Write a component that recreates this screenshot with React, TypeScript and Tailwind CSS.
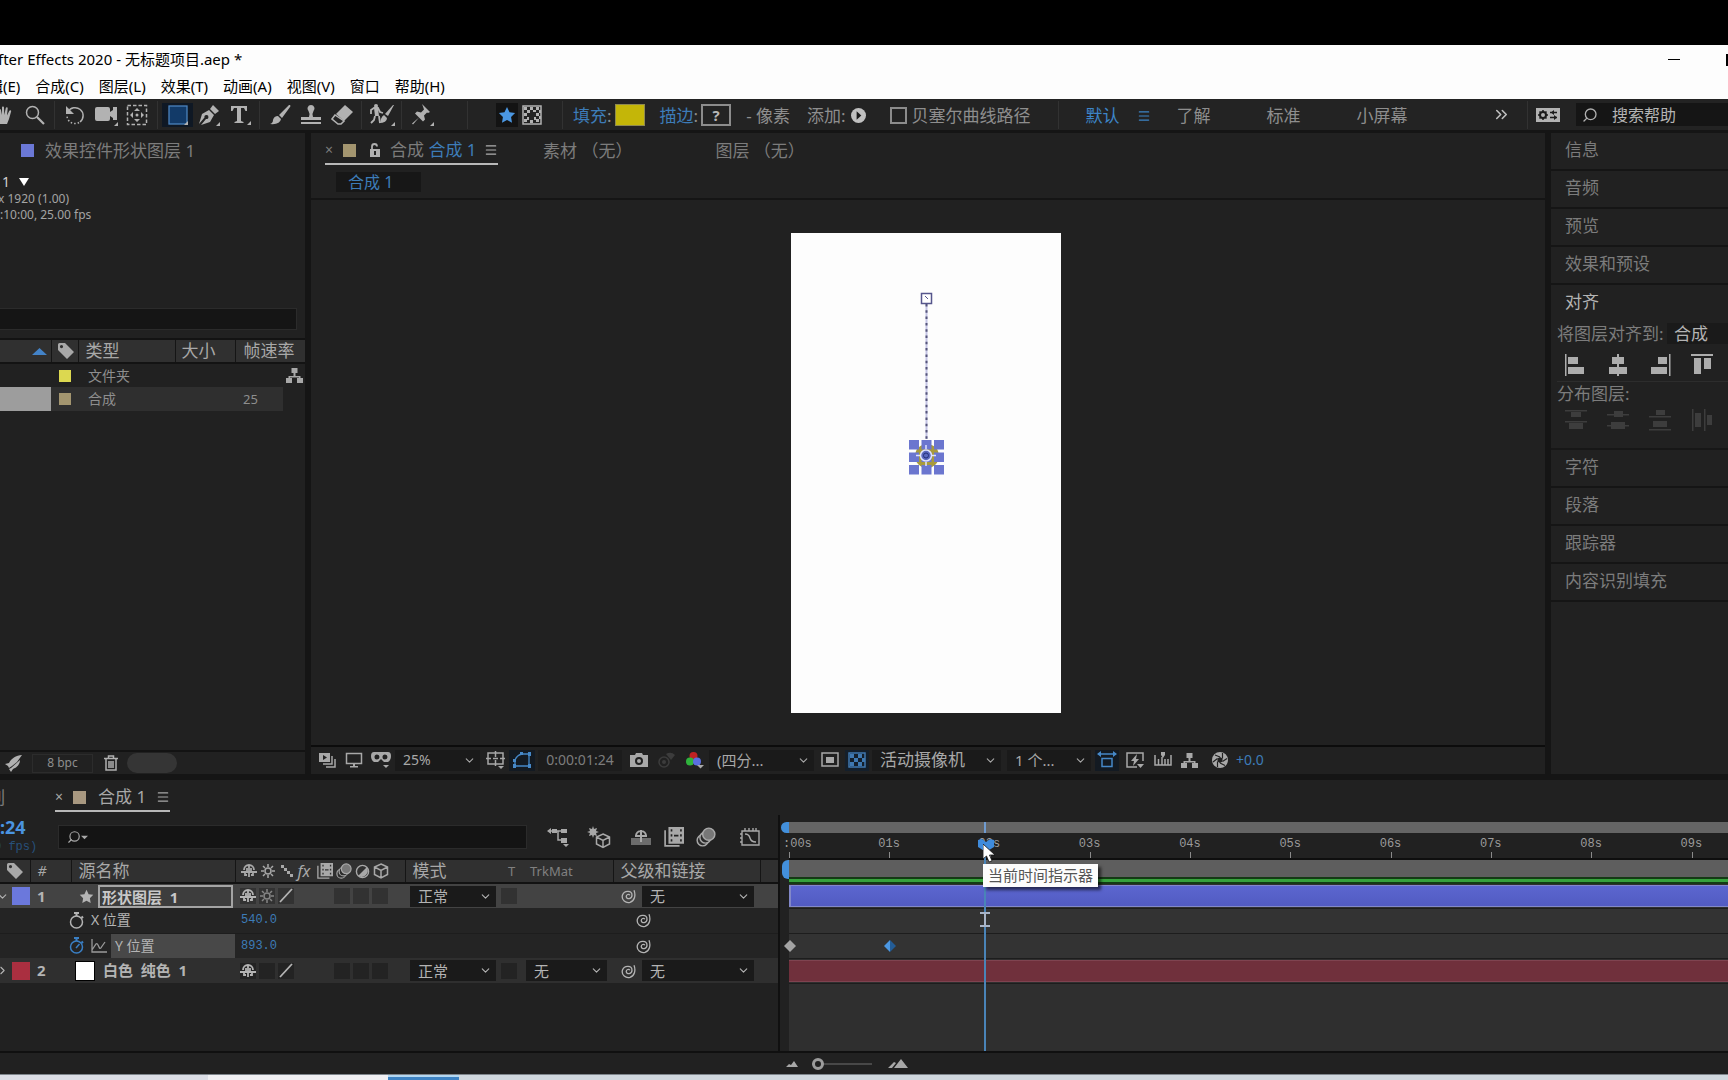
import type { ReactNode } from "react";
import { ChevronDown, ChevronRight, ChevronsRight, Menu, Search } from "lucide-react";

type IconProps = { size?: number; box?: number; className?: string; children: ReactNode };

function Icon({ size = 20, box = 20, className = "", children }: IconProps) {
  return (
    <svg width={size} height={size} viewBox={`0 0 ${box} ${box}`} fill="currentColor" className={`shrink-0 ${className}`} aria-hidden="true">
      {children}
    </svg>
  );
}

const line = { fill: "none", stroke: "currentColor", strokeWidth: 1.5 };
const corner = <path d="M20 16v4h-4z" />;

const HandIcon = () => (
  <Icon>
    <path d="M6 19 2 11.5c-.6-1.4 1-2 1.8-1L6 13 5 5c-.1-1.300 1.600-1.500 1.900-.2L8 10V2.500c0-1.400 1.900-1.400 2 0l.3 7.500L11.800 3c.3-1.300 2-1 1.900.3L13 10.500l2.300-4.700c.6-1.200 2.200-.5 1.800.8L15 14l-2 5z" />
  </Icon>
);
const LensIcon = () => (
  <Icon>
    <circle cx="7.500" cy="7.500" r="6" {...line} />
    <path d="m12 12 7 7" {...line} strokeWidth={2.200} />
  </Icon>
);
const RotateIcon = () => (
  <Icon>
    <path d="M3 7a8 8 0 1 1 12 10" {...line} />
    <path d="M1 1v8h8z" />
    <path d="M14 17.500A8 8 0 0 1 2 10" {...line} strokeDasharray="1.500 2" />
  </Icon>
);
const CameraIcon = () => (
  <Icon size={24} box={24}>
    <path d="M1 6q0-2 2-2h11q2 0 2 2v3l3-2V4h4v13h-4v-2l-3-2v3q0 2-2 2H3q-2 0-2-2z" />
    <path d="M24 19v4h-4z" />
  </Icon>
);
const PanBehindIcon = () => (
  <Icon size={22} box={22}>
    <rect x="1.500" y="1.500" width="19" height="19" {...line} strokeDasharray="3.500 2" />
    <path d="m11 4 3 3H8zM11 18l3-3H8zM4 11l3-3v6zM18 11l-3-3v6z" />
    <circle cx="11" cy="11" r="1.500" />
  </Icon>
);
const PenIcon = () => (
  <Icon size={22} box={22}>
    <path d="M1 20 4 10l7-4 5 5-4 7-9 3 5-6a2 2 0 1 0-1.500-1.500z" />
    <path d="m12 5 3-4 6 6-4 3z" />
    <path d="M22 18v4h-4z" />
  </Icon>
);
const TypeIcon = () => (
  <Icon size={22} box={22}>
    <path d="M2 2h16v5h-1.500L15 4h-3v13l2.500 1v1h-9v-1L8 17V4H5L3.500 7H2z" />
    <path d="M22 17v4h-4z" />
  </Icon>
);
const BrushIcon = () => (
  <Icon size={22} box={22}>
    <path d="M21 1q1 1 0 2l-8 11-3-3L20 1zM9 12l3 3q-1 6-11 5 3-1 3-4 1-4 5-4z" />
  </Icon>
);
const StampIcon = () => (
  <Icon size={22} box={22}>
    <path d="M11 1a3.500 3.500 0 0 1 2.500 6Q12 9 13 13h8v3H1v-3h8q1-4-.5-6A3.500 3.500 0 0 1 11 1zM1 18h20v2H1z" />
  </Icon>
);
const EraserIcon = () => (
  <Icon size={22} box={22}>
    <path d="M14 1 22 8 13 17 5 10z" />
    <path d="m4 11-3 4 6 5h3l3-3z" {...line} />
  </Icon>
);
const RotoIcon = () => (
  <Icon size={26} box={26}>
    <circle cx="7" cy="4" r="2" />
    <path d="M2 12V8l3-2h4l2 4 3 1M10 14l1 7M6 14l-1 4-3 3" {...line} strokeWidth={1.800} />
    <path d="M5 6h4l1 8H6z" />
    <path d="m25 3-6 11-3-2 8-9zM15 13l3 3q0 5-8 5 2-1 2-4 1-3 3-4z" />
    <path d="M26 20v4h-4z" />
  </Icon>
);
const PinIcon = () => (
  <Icon size={24} box={24}>
    <path d="m12 1 8 8-2 1-1-.5-3 3 1 4-2 2-4-4-6 7-1-1 7-6-4-4 2-2 4 1 3-3-1-3z" />
    <path d="M24 19v4h-4z" />
  </Icon>
);
const StarIcon = ({ size = 18 }: { size?: number }) => (
  <Icon size={size} box={20}>
    <path d="m10 1 2.800 6 6.200.8-4.500 4.400 1.100 6.300L10 15.500l-5.600 3 1.100-6.300L1 7.800 7.200 7z" />
  </Icon>
);
const MaskPatternIcon = () => (
  <Icon>
    <rect x="1" y="1" width="18" height="18" {...line} />
    <path d="M2 2h3v3H2zM8 2h3v3H8zM14 2h3v3h-3zM5 5h3v3H5zM11 5h3v2h-3zM2 8h3v3H2zM14 8h3v3h-3zM2 14h3v3H2zM8 15h3v3H8zM14 14h3v3h-3zM5 12h2v3H5zM12 12h2v3h-2zM17 5h2v3h-2zM17 11h2v3h-2z" />
  </Icon>
);
const TagIcon = () => (
  <Icon size={16} box={16}>
    <path fillRule="evenodd" d="M0 1.500Q0 0 1.500 0H7l9 9-7 7-9-9zM3.500 2a1.600 1.600 0 1 0 0 3.200 1.600 1.600 0 0 0 0-3.200z" />
  </Icon>
);
const FlowchartIcon = () => (
  <Icon size={17} box={17}>
    <path d="M5.500 1h6v5h-2v3h5v2H17v5h-6v-5h2v-.5H4v.5h2v5H0v-5h2.500V9h5V6h-2z" />
  </Icon>
);
const SpiralIcon = () => (
  <Icon size={16} box={16}>
    <path d="M9.800 7.200C9 5.500 6 6.500 6.300 8.800c.5 3 5.700 2.200 5.700-1.500C12 2.500 4.500 2 2.500 7c-1.500 5 3.500 8.500 7.500 7.300 4.500-1.500 6-6.800 4-12" {...line} strokeWidth={1.300} />
  </Icon>
);
const ShyIcon = ({ size = 16 }: { size?: number }) => (
  <Icon size={size} box={16}>
    <path d="M3 7a5 5 0 0 1 10 0M8 2v12M0 9h16M4 9v3h2M12 9v3h-2M6 5v4M10 5v4" {...line} strokeWidth={1.800} />
  </Icon>
);
const SunIcon = () => (
  <Icon size={16} box={16}>
    <circle cx="8" cy="8" r="3" {...line} />
    <path d="M8 1v3M8 12v3M1 8h3M12 8h3M3 3l2 2M11 11l2 2M3 13l2-2M11 5l2-2" {...line} />
  </Icon>
);
const SlashIcon = () => (
  <Icon size={16} box={16}>
    <path d="M2 14 14 1" {...line} strokeWidth={1.800} />
  </Icon>
);
const DashIcon = () => (
  <Icon size={16} box={16}>
    <path d="M2 2h3v3H2zM5 5h3v3H5zM8 8h3v3H8zM11 11h3v3h-3z" />
  </Icon>
);
const FilmIcon = ({ size = 16 }: { size?: number }) => (
  <Icon size={size} box={18}>
    <path fillRule="evenodd" d="M4 0h14v15H4zM6 2v2h1.500V2zM6 6.500v2h1.500v-2zM6 11v2h1.500v-2zM14.500 2v2H16V2zM14.500 6.500v2H16v-2zM14.500 11v2H16v-2zM9 7v1.500h4V7z" />
    <path d="M1 3v14h13" {...line} />
  </Icon>
);
const BlurIcon = ({ size = 16 }: { size?: number }) => (
  <Icon size={size} box={18}>
    <circle cx="6" cy="12" r="5" fill="#2b2b2b" stroke="currentColor" strokeWidth="1.300" />
    <circle cx="8.500" cy="9.500" r="5" fill="#2b2b2b" stroke="currentColor" strokeWidth="1.300" />
    <circle cx="11.500" cy="6.500" r="5.500" fill="#777" stroke="currentColor" strokeWidth="1.300" />
  </Icon>
);
const AdjustIcon = () => (
  <Icon size={15} box={16}>
    <circle cx="8" cy="8" r="6.500" {...line} />
    <path d="M12.500 3.500a6.500 6.500 0 0 1-9 9z" />
  </Icon>
);
const CubeIcon = () => (
  <Icon size={16} box={16}>
    <path d="m8 1 6.500 3v7.500L8 15l-6.500-3.500V4zM1.500 4 8 7.500 14.500 4M8 7.500V15" {...line} />
  </Icon>
);
const StopwatchIcon = ({ active = false }: { active?: boolean }) => (
  <Icon size={17} box={17} className={active ? "text-[#3a7fc4]" : ""}>
    <circle cx="8.500" cy="10" r="6" {...line} />
    <path d="M6 1h5M8.500 1v3M13.500 4.500 15 6" {...line} strokeWidth={2} />
    {active && <path d="m8 11 3.500-4" {...line} />}
  </Icon>
);
const GraphIcon = () => (
  <Icon size={16} box={16}>
    <path d="M1 1v13h15M1 12l4-6q1-1 2 1l1.500 3q1 1 2-1L14 4" {...line} strokeWidth={1.300} />
  </Icon>
);

/* ---------- shared bits ---------- */

function ToolButton({ label, active, children }: { label: string; active?: boolean; children: ReactNode }) {
  return (
    <button
      aria-label={label}
      className={`flex h-6 w-[31px] shrink-0 items-center justify-center ${active ? "bg-[#0f1824]" : ""}`}
    >
      {children}
    </button>
  );
}

function Divider({ className = "w-[9px]" }: { className?: string }) {
  return (
    <div className={`flex shrink-0 justify-center ${className}`}>
      <div className="h-7 w-px bg-[#323232]" />
    </div>
  );
}

type DropProps = { label: string; value: string; className?: string; size?: string };

function Drop({ label, value, className = "", size = "text-[15px]" }: DropProps) {
  return (
    <div className={`grid h-[21px] items-center bg-[#1a1a1a] ${className}`}>
      <select aria-label={label} className={`col-start-1 row-start-1 h-[21px] w-full appearance-none bg-transparent pl-2 leading-5 outline-none ${size}`}>
        <option>{value}</option>
      </select>
      <ChevronDown size={13} className="pointer-events-none col-start-1 row-start-1 mr-1 justify-self-end" />
    </div>
  );
}

/* ---------- window chrome ---------- */

const menus = ["合成(C)", "图层(L)", "效果(T)", "动画(A)", "视图(V)", "窗口", "帮助(H)"];

function TitleBar() {
  return (
    <header className="h-[54px] shrink-0 overflow-hidden bg-[#fdfdfd] text-[15px] text-black">
      <div className="flex h-[29px] items-center justify-between">
        <h1 className="-ml-0.5 whitespace-pre">fter Effects 2020 - 无标题项目.aep *</h1>
        <div className="flex items-center">
          <button aria-label="最小化" className="flex h-6 w-[46px] items-center justify-center">
            <span className="h-px w-3 bg-black" />
          </button>
          <button aria-label="最大化" className="ml-[29px] h-3 w-0.5 bg-black" />
        </div>
      </div>
      <nav className="-ml-3 flex h-6 items-center gap-[15px]">
        <button>辑(E)</button>
        {menus.map((m) => (
          <button key={m}>{m}</button>
        ))}
      </nav>
    </header>
  );
}

const workspaces = ["了解", "标准", "小屏幕"];

function Toolbar() {
  return (
    <div className="flex h-[31px] shrink-0 items-center overflow-hidden bg-[#232323] text-[17px] text-[#8e8e8e]">
      <div className="-ml-3 flex shrink-0 items-center text-[#b2b2b2]">
        <ToolButton label="手形工具"><HandIcon /></ToolButton>
        <ToolButton label="缩放工具"><LensIcon /></ToolButton>
        <Divider />
        <ToolButton label="旋转工具"><RotateIcon /></ToolButton>
        <ToolButton label="摄像机工具"><CameraIcon /></ToolButton>
        <ToolButton label="锚点工具"><PanBehindIcon /></ToolButton>
        <Divider className="w-2.5" />
        <ToolButton label="矩形工具" active>
          <Icon>
            <rect x="1" y="1" width="18" height="18" fill="#123a68" stroke="#4b83bd" strokeWidth="1.300" />
            {corner}
          </Icon>
        </ToolButton>
        <ToolButton label="钢笔工具"><PenIcon /></ToolButton>
        <ToolButton label="文字工具"><TypeIcon /></ToolButton>
        <Divider />
        <ToolButton label="画笔工具"><BrushIcon /></ToolButton>
        <ToolButton label="仿制图章工具"><StampIcon /></ToolButton>
        <ToolButton label="橡皮擦工具"><EraserIcon /></ToolButton>
        <Divider />
        <ToolButton label="Roto 笔刷工具"><RotoIcon /></ToolButton>
        <Divider />
        <ToolButton label="人偶位置控点工具"><PinIcon /></ToolButton>
      </div>
      <Divider className="ml-[26px] w-[9px]" />
      <button aria-label="工具创建形状" className="ml-6 flex h-6 w-[22px] shrink-0 items-center justify-center bg-[#131313] text-[#4b97e2]">
        <StarIcon />
      </button>
      <button aria-label="工具创建蒙版" className="ml-1 shrink-0 text-[#b2b2b2]"><MaskPatternIcon /></button>
      <Divider className="ml-4 w-[9px]" />
      <button className="ml-1.5 shrink-0 pt-0.5 text-[#3d7cb8]">填充<span className="text-[#8e8e8e]">:</span></button>
      <button aria-label="填充颜色" className="ml-[3px] h-[22px] w-[30px] shrink-0 border border-[#8f8a50] bg-[#c4b608]" />
      <button className="ml-[15px] shrink-0 pt-0.5 text-[#3d7cb8]">描边<span className="text-[#8e8e8e]">:</span></button>
      <button aria-label="描边颜色" className="ml-[3px] h-[22px] w-[30px] shrink-0 border-2 border-[#8c8c8c] text-[15px] leading-[18px] font-bold text-[#b8b8b8]">?</button>
      <span className="ml-[15px] shrink-0 pt-0.5">- 像素</span>
      <button className="ml-[17px] flex shrink-0 items-center gap-[5px] pt-0.5">
        添加:
        <Icon size={15} box={16} className="text-[#c0c0c0]">
          <circle cx="8" cy="8" r="8" />
          <path d="m6 3.500 5 4.500-5 4.500z" fill="#1b1b1b" />
        </Icon>
      </button>
      <label className="ml-6 flex shrink-0 items-center gap-[5px] pt-0.5">
        <input type="checkbox" className="size-[17px] appearance-none border-2 border-[#8c8c8c]" />
        贝塞尔曲线路径
      </label>
      <Divider className="ml-[23px] w-[9px]" />
      <div className="ml-[23px] flex flex-1 items-center pt-0.5">
        <button className="flex shrink-0 items-center gap-[17px] text-[#3d85c8]">
          默认 <Menu size={14} />
        </button>
        <div className="ml-[26px] flex gap-[56px]">
          {workspaces.map((w) => (
            <button key={w} className="shrink-0">{w}</button>
          ))}
        </div>
      </div>
      <button aria-label="更多工作区" className="mr-1 shrink-0 text-[#c0c0c0]"><ChevronsRight size={19} /></button>
      <Divider className="ml-1 w-[17px]" />
      <button aria-label="工作区设置" className="shrink-0 text-[#b2b2b2]">
        <svg width="24" height="14" viewBox="0 0 24 14" fill="currentColor" aria-hidden="true">
          <path d="M0 0h24v14H0z" />
          <circle cx="7" cy="7" r="3" fill="none" stroke="#1b1b1b" strokeWidth="2" />
          <path d="M7 2v2M7 10v2M2 7h2M10 7h2M3.500 3.500 5 5M9 9l1.500 1.500M3.500 10.500 5 9M9 5l1.500-1.500M14 4.500h7M14 9.500h7" stroke="#1b1b1b" strokeWidth="1.500" />
          <path d="m18 2-3 2.500L18 7zM18 7l3 2.500-3 2.500z" fill="#1b1b1b" />
        </svg>
      </button>
      <label className="ml-4 flex h-[23px] w-[152px] shrink-0 items-center gap-3.5 bg-[#151515] pl-1.5">
        <Search size={16} className="-scale-x-100 text-[#b0b0b0]" />
        <input aria-label="搜索帮助" placeholder="搜索帮助" className="min-w-0 flex-1 bg-transparent text-base outline-none placeholder:text-[#b4b4b4]" />
      </label>
    </div>
  );
}

/* ---------- project panel ---------- */

function ProjectPanel() {
  return (
    <section className="flex w-[305px] shrink-0 flex-col bg-[#212121]">
      <div className="flex h-[34px] shrink-0 items-center pl-[21px] text-[17px] text-[#7c7c7c]">
        <span className="mr-[11px] size-[13px] bg-[#6b78d6]" />
        <span className="pt-0.5">效果控件形状图层 1</span>
      </div>
      <div className="h-[141px] shrink-0 pt-1.5 text-xs leading-4 text-[#a4a4a4]">
        <button className="flex h-[18px] items-center gap-[9px] pl-0.5 text-sm text-[#d0d0d0]">
          1
          <Icon size={10} box={10} className="text-white"><path d="M0 1h10L5 9z" /></Icon>
        </button>
        <p className="-ml-0.5">x 1920 (1.00)</p>
        <p>:10:00, 25.00 fps</p>
      </div>
      <div className="mr-2 h-[22px] shrink-0 border border-l-0 border-[#2b2b2b] bg-[#151515]">
        <input aria-label="搜索项目" className="h-full w-full bg-transparent outline-none" />
      </div>
      <div className="mt-2 flex flex-1 items-start">
        <table className="w-full table-fixed border-collapse text-left text-sm text-[#8e8e8e]">
          <colgroup>
            <col className="w-[51px]" />
            <col className="w-[27px]" />
            <col className="w-[97px]" />
            <col className="w-[60px]" />
            <col className="w-[48px]" />
            <col />
          </colgroup>
          <thead>
            <tr className="h-6 border-y-2 border-[#131313] bg-[#303030] text-[17px] leading-[22px] text-[#a8a8a8]">
              <th className="border-r border-[#151515] p-0">
                <Icon size={15} box={15} className="ml-8 text-[#4383c8]"><path d="M0 11h15L7.500 4z" /></Icon>
              </th>
              <th className="border-r border-[#151515] p-0 pl-1.5"><TagIcon /></th>
              <th className="border-r border-[#151515] p-0 pl-[7px] font-normal">类型</th>
              <th className="border-r border-[#151515] p-0 pl-1.5 font-normal">大小</th>
              <th colSpan={2} className="p-0 pl-2 font-normal">帧速率</th>
            </tr>
          </thead>
          <tbody>
            <tr className="h-6">
              <td className="p-0" />
              <td className="p-0 pl-2"><span className="block size-3 bg-[#dcd850]" /></td>
              <td className="p-0 pl-2.5">文件夹</td>
              <td className="p-0" />
              <td className="p-0" />
              <td className="p-0 pl-[3px] text-[#a8a8a8]"><FlowchartIcon /></td>
            </tr>
            <tr className="h-6">
              <td className="bg-[#9d9d9d] bg-clip-padding p-0" />
              <td className="bg-[#2f2f2f] p-0 pl-2"><span className="block size-3 bg-[#a3956f]" /></td>
              <td className="bg-[#2f2f2f] p-0 pl-2.5">合成</td>
              <td className="bg-[#2f2f2f] p-0" />
              <td className="bg-[#2f2f2f] p-0 pl-2 text-[13px]">25</td>
              <td className="p-0" />
            </tr>
          </tbody>
        </table>
      </div>
      <div className="flex h-6 shrink-0 items-center border-t-2 border-[#131313] text-[#b0b0b0]">
        <button aria-label="解释素材" className="ml-[5px]">
          <Icon size={17} box={17}>
            <path d="M17 0C11 0 6 4 4 8l-4 1 3 2 1 2 3-2 5-4zM6 13l9-8c0 5-4 8-7 9l-2 3-2-3z" />
          </Icon>
        </button>
        <button className="ml-2.5 h-[19px] w-[61px] border border-[#2c2c2c] text-xs leading-4 text-[#8e8e8e]">8 bpc</button>
        <button aria-label="删除所选项目" className="ml-2.5">
          <Icon size={16} box={16}>
            <path d="M1 3.500h14M5.500 3V1h5v2M3 4v11h10V4M6 6v7M8 6v7M10 6v7" {...line} />
          </Icon>
        </button>
        <div className="ml-2 h-5 w-[50px] rounded-full bg-[#353535]" />
      </div>
    </section>
  );
}

/* ---------- composition viewer ---------- */

const handles = [0, 12.5, 25];

function MotionOverlay() {
  return (
    <svg width="38" height="186" viewBox="0 0 38 186" className="absolute top-[59px] left-[117px]" aria-hidden="true">
      <path d="M18.500 12v135" stroke="#c3c3e4" strokeWidth="2" />
      <path d="M18.500 12v135" stroke="#55557a" strokeWidth="2" strokeDasharray="2.500 3.800" />
      <rect x="13.500" y="1.500" width="10" height="10" fill="#fff" stroke="#56568c" strokeWidth="1.500" />
      <path d="m17 4 3 3" stroke="#56568c" />
      <circle cx="19" cy="164" r="12" fill="#a89a3c" />
      {handles.map((x) =>
        handles.map((y) => <rect key={`${x}-${y}`} x={1 + x} y={148 + y} width="10" height="9.500" fill="#6b76cf" />)
      )}
      <circle cx="18" cy="163.500" r="5.500" fill="#5a67bd" stroke="#dfe3ff" strokeWidth="1.500" />
      <circle cx="18" cy="163.500" r="2.500" fill="none" stroke="#23307a" strokeWidth="1" />
      <path d="M18 153v4M18 170v4M8 163.500h4M24 163.500h4" stroke="#dfe3ff" strokeWidth="1.500" />
    </svg>
  );
}

function ViewerFooter() {
  return (
    <div className="flex h-[29px] shrink-0 items-center overflow-hidden border-t-2 border-[#0c0c0c] pb-px text-[#a8a8a8]">
      <button aria-label="始终预览此视图" className="ml-[7px]">
        <Icon size={18} box={18}>
          <path fillRule="evenodd" d="M1 2h11v9H1zM5 4v5l4-2.500z" />
          <path d="M14 5v8H5M17 8v8H8" {...line} />
        </Icon>
      </button>
      <button aria-label="主查看器" className="ml-[9px]">
        <Icon size={18} box={18}>
          <path d="M1.500 2.500h15v10h-15z" {...line} />
          <path d="M8 13h2v2h3v1.500H5V15h3z" />
        </Icon>
      </button>
      <button aria-label="3D 眼镜" className="ml-2">
        <Icon size={20} box={20}>
          <path fillRule="evenodd" d="M3 2h14q3 0 3 4t-3 6h-4l-3-3-3 3H3Q0 10 0 6t3-4zM6 4.500a2.500 2.500 0 1 0 0 5 2.500 2.500 0 0 0 0-5zM14 4.500a2.500 2.500 0 1 0 0 5 2.500 2.500 0 0 0 0-5z" />
          <path d="M12 15h6l-3 3z" />
        </Icon>
      </button>
      <Drop label="放大率" value="25%" className="ml-1 w-[85px]" size="text-sm" />
      <button aria-label="网格和参考线" className="ml-1.5">
        <Icon size={20} box={20}>
          <path d="M2 3h15v11H2zM9.500 1v6M9.500 10v6M0 8.500h5M14 8.500h5M7 8.500h5" {...line} />
          <path d="M12 16h6l-3 3z" />
        </Icon>
      </button>
      <button aria-label="切换蒙版和形状路径可见性" className="ml-[3px] flex h-[21px] w-[26px] items-center justify-center bg-[#131a22] text-[#4688c8]">
        <Icon size={18} box={18}>
          <path d="M2 15V9q2-5 7-6h7v12z" {...line} strokeWidth={1.300} />
          <path d="M0 13h3v4H0zM15 13h3v4h-3zM15 1h3v4h-3zM7 1h3v3H7zM0 8h3v3H0z" />
        </Icon>
      </button>
      <button className="ml-[3px] h-[21px] w-[84px] bg-[#1c1c1c] text-sm leading-5 text-[#7c7c7c]">0:00:01:24</button>
      <button aria-label="拍摄快照" className="ml-2">
        <Icon size={18} box={18}>
          <path fillRule="evenodd" d="M0 4h5l1-2h6l1 2h5v12H0zM9 6a4 4 0 1 0 0 8 4 4 0 0 0 0-8zM9 8a2 2 0 1 1 0 4 2 2 0 0 1 0-4z" />
        </Icon>
      </button>
      <button aria-label="显示快照" className="ml-[9px] text-[#3c3c3c]">
        <Icon size={19} box={19}>
          <circle cx="7" cy="11" r="5" {...line} />
          <circle cx="7" cy="11" r="2" />
          <path d="M9 3q5-3 9 1l-4 5z" />
        </Icon>
      </button>
      <button aria-label="显示通道" className="ml-2.5">
        <Icon size={18} box={18}>
          <circle cx="7.500" cy="5" r="4" fill="#c02222" />
          <circle cx="4" cy="10.500" r="4" fill="#2fb33c" />
          <circle cx="11" cy="10.500" r="4" fill="#5a6ee0" />
          <path d="M11 14h7l-3.500 3.500z" />
        </Icon>
      </button>
      <Drop label="分辨率" value="(四分..." className="ml-[5px] w-[105px]" />
      <button aria-label="目标区域" className="ml-[7px]">
        <Icon size={18} box={18}>
          <path d="M1 2h16v13H1z" {...line} />
          <path d="M5 6h8v6H5z" />
        </Icon>
      </button>
      <button aria-label="切换透明网格" className="ml-1.5 flex h-[21px] w-6 items-center justify-center bg-[#141f2b] text-[#3f78b0]">
        <Icon size={18} box={18}>
          <path d="M1 2h16v14H1z" {...line} />
          <path d="M2 3h4v4H2zM10 3h4v4h-4zM6 7h4v4H6zM14 7h3v4h-3zM2 11h4v4H2zM10 11h4v4h-4z" />
        </Icon>
      </button>
      <Drop label="3D 视图" value="活动摄像机" className="ml-[3px] w-[129px]" size="text-[17px]" />
      <Drop label="视图布局" value="1 个..." className="ml-1.5 w-[84px]" />
      <button aria-label="切换像素长宽比校正" className="ml-1 flex h-[21px] w-6 items-center justify-center bg-[#131a22] text-[#4688c8]">
        <Icon size={20} box={20}>
          <path d="M1 4h18M5 8.500h10v8H5z" {...line} />
          <path d="m0 4 4-3v6zM20 4l-4-3v6z" />
        </Icon>
      </button>
      <button aria-label="快速预览" className="ml-[7px]">
        <Icon size={18} box={18}>
          <path d="M11 16H1V2h16v8" {...line} />
          <path d="m11 3-6 7h3l-1 5 6-7h-3zM11 13h7l-3.500 4z" />
        </Icon>
      </button>
      <button aria-label="时间轴" className="ml-2.5">
        <Icon size={18} box={18}>
          <path d="M1 4v10h16V4M4.500 8v6M8 6v8M11 8v6M14 8v6" {...line} />
          <path d="M7 1h4v3L9 7 7 4z" />
        </Icon>
      </button>
      <button aria-label="合成流程图" className="ml-[9px]"><FlowchartIcon /></button>
      <button aria-label="重置曝光度" className="ml-3.5">
        <Icon size={16} box={16}>
          <path fillRule="evenodd" d="M8 0a8 8 0 1 1 0 16A8 8 0 0 1 8 0zM8 5 5.500 6.500v3L8 11l2.500-1.500v-3z" />
          <path d="M8 5 3 3M10.500 6.500 10.500 1M10.500 9.500 15 6.500M8 11l5 2.500M5.500 9.500 5.500 15M5.500 6.500 1 10" stroke="#212121" strokeWidth="1.200" />
        </Icon>
      </button>
      <button className="ml-2 text-sm text-[#3d7cb8]">+0.0</button>
    </div>
  );
}

function Viewer() {
  return (
    <section className="flex min-w-0 flex-1 flex-col bg-[#212121]">
      <div className="flex h-8 shrink-0 items-center text-[17px] text-[#7c7c7c]">
        <div className="ml-3.5 flex h-8 w-[173px] shrink-0 items-center border-b-2 border-[#b8b8b8] pt-1">
          <button aria-label="关闭" className="text-sm">×</button>
          <span className="ml-2.5 size-[13px] bg-[#a3956f]" />
          <Icon size={14} box={14} className="ml-3 text-[#b0b0b0]">
            <path fillRule="evenodd" d="M2 6h10v8H2zM6 8v4h2V8z" />
            <path d="M4 6V3.500a2.500 2.500 0 0 1 5 0" {...line} strokeWidth={1.800} />
          </Icon>
          <span className="ml-2 shrink-0">合成 <span className="text-[#3d7cb8]">合成 1</span></span>
          <button aria-label="面板菜单" className="ml-auto text-[#b0b0b0]"><Menu size={14} /></button>
        </div>
        <button className="ml-[45px] pt-[3px]">素材 （无）</button>
        <button className="ml-[83px] pt-[3px]">图层 （无）</button>
      </div>
      <div className="flex h-[35px] shrink-0 items-center border-b-2 border-[#151515] pl-[25px]">
        <button className="h-5 w-[85px] bg-[#171717] pl-3 text-left text-base leading-5 text-[#3d7cb8]">合成 1</button>
      </div>
      <div className="flex min-h-0 flex-1 justify-center pt-[33px] pb-8">
        <div className="relative -ml-1 aspect-[9/16] h-full bg-[#fdfdfd]">
          <MotionOverlay />
        </div>
      </div>
      <ViewerFooter />
    </section>
  );
}

/* ---------- right column ---------- */

const panelsTop = ["信息", "音频", "预览", "效果和预设"];
const panelsBottom = ["字符", "段落", "跟踪器", "内容识别填充"];

const alignPaths = [
  "M0 0h1.500v22H0zM3 3h10v7H3zM3 13h16v7H3z",
  "M10 0h2v22h-2zM5 3h12v7H5zM2 13h18v7H2z",
  "M20 0h1.500v22H20zM9 3h9v7H9zM2 13h16v7H2z",
  "M0 0h22v2H0zM3 4h7v16H3zM13 4h7v11h-7z",
];
const distributePaths = [
  "M0 1h22v1.500H0zM6 3h10v5H6zM0 12h22v1.500H0zM4 14h14v6H4z",
  "M0 5h22v1.500H0zM7 2h9v6H7zM0 16h22v1.500H0zM4 13h14v7H4z",
  "M7 1h9v5H7zM0 7h22v1.500H0zM4 12h14v6H4zM0 20h22v1.500H0z",
  "M1 0h1.500v22H1zM4 4h6v14H4zM13 0h1.500v22H13zM16 6h5v10h-5z",
];

function PanelTitle({ name }: { name: string }) {
  return (
    <button className="block h-[38px] w-full border-b-2 border-[#151515] pb-0.5 pl-[14px] text-left text-[17px] text-[#7c7c7c]">
      {name}
    </button>
  );
}

function AlignRow({ paths, label, className }: { paths: string[]; label: string; className: string }) {
  return (
    <div className={`flex gap-5 overflow-hidden pl-3.5 ${className}`}>
      {paths.map((d, i) => (
        <button key={d} aria-label={`${label} ${i + 1}`} className="shrink-0">
          <Icon size={22} box={22}><path d={d} /></Icon>
        </button>
      ))}
    </div>
  );
}

function SidePanels() {
  return (
    <aside className="w-[177px] shrink-0 overflow-hidden bg-[#212121]">
      {panelsTop.map((p) => <PanelTitle key={p} name={p} />)}
      <div className="h-[165px] border-b-2 border-[#171717] text-[17px] text-[#7c7c7c]">
        <h2 className="h-[35px] pl-3.5 leading-[34px] text-[#b4b4b4]">对齐</h2>
        <label className="flex h-[27px] items-center justify-between pl-1.5">
          将图层对齐到:
          <select aria-label="将图层对齐到" className="h-[21px] w-[61px] appearance-none bg-[#1a1a1a] pl-[7px] text-[17px] leading-5 text-[#b4b4b4] outline-none">
            <option>合成</option>
          </select>
        </label>
        <AlignRow paths={alignPaths} label="对齐" className="mt-[7px] text-[#adadad]" />
        <p className="mt-[5px] ml-1.5 border-t border-[#2d2d2d] leading-6">分布图层:</p>
        <AlignRow paths={distributePaths} label="分布" className="mt-[3px] text-[#3d3d3d]" />
      </div>
      {panelsBottom.map((p) => <PanelTitle key={p} name={p} />)}
    </aside>
  );
}

/* ---------- timeline ---------- */

const cell = "p-0 align-middle";
const value = "pl-1.5 font-['Liberation_Mono',monospace] text-xs text-[#3d7cb8]";

function Box({ children, className = "" }: { children?: ReactNode; className?: string }) {
  return <span className={`flex size-4 shrink-0 items-center justify-center bg-black/25 ${className}`}>{children}</span>;
}

function Switches({ shape }: { shape?: boolean }) {
  return (
    <div className="flex items-center pl-[5px]">
      <Box><ShyIcon /></Box>
      <Box className="ml-[3px] text-[#858585]">{shape && <SunIcon />}</Box>
      <Box className="ml-[3px]"><SlashIcon /></Box>
      <Box className="ml-10" />
      <Box className="ml-[3px]" />
      <Box className="ml-[3px]" />
    </div>
  );
}

function ParentPick() {
  return (
    <div className="flex items-center gap-1.5 pl-[7px]">
      <button aria-label="父级关联器"><SpiralIcon /></button>
      <Drop label="父级" value="无" className="w-[112px]" />
    </div>
  );
}

function LayerTable() {
  return (
    <table className="w-full table-fixed border-collapse text-left text-[15px] text-[#b4b4b4]">
      <colgroup>
        <col className="w-[30px]" />
        <col className="w-[41px]" />
        <col className="w-[164px]" />
        <col className="w-[170px]" />
        <col className="w-[96px]" />
        <col className="w-[25px]" />
        <col className="w-[87px]" />
        <col className="w-[147px]" />
        <col />
      </colgroup>
      <thead>
        <tr className="h-6 border-y-2 border-[#121212] bg-[#303030] text-[17px] leading-5 text-[#a8a8a8] [&>th]:font-normal">
          <th className={`${cell} border-r border-[#151515] pl-[7px]`}><TagIcon /></th>
          <th className={`${cell} border-r border-[#151515] pl-[7px] text-sm italic`}>#</th>
          <th className={`${cell} border-r border-[#151515] pl-[7px]`}>源名称</th>
          <th className={`${cell} border-r border-[#151515]`}>
            <div className="flex items-center gap-[3px] pl-[5px]">
              <ShyIcon /><SunIcon /><DashIcon />
              <em className="w-4 text-base leading-4">fx</em>
              <FilmIcon /><BlurIcon /><AdjustIcon /><CubeIcon />
            </div>
          </th>
          <th className={`${cell} pl-[7px]`}>模式</th>
          <th className={`${cell} pl-[7px] text-[13px] text-[#808080]`}>T</th>
          <th className={`${cell} border-r border-[#151515] pl-1 text-[13px] text-[#808080]`}>TrkMat</th>
          <th className={`${cell} border-r border-[#151515] pl-[7px]`}>父级和链接</th>
          <th className={cell} />
        </tr>
      </thead>
      <tbody>
        <tr className="h-[25px] bg-[#434343]">
          <td className={cell}>
            <div className="flex items-center">
              <button aria-label="折叠图层" className="-ml-1"><ChevronDown size={13} /></button>
              <span className="ml-[3px] size-[18px] bg-[#6b78dc]" />
            </div>
          </td>
          <td className={`${cell} pl-[7px] font-bold`}>1</td>
          <td className={cell}>
            <div className="flex items-center gap-1 pl-2">
              <StarIcon size={15} />
              <input
                aria-label="图层名称"
                defaultValue="形状图层  1"
                className="h-[23px] w-[135px] border-2 border-[#a4a4a4] bg-[#3d3d3d] pl-0.5 font-bold text-[#c8c8c8] outline-none"
              />
            </div>
          </td>
          <td className={cell}><Switches shape /></td>
          <td className={cell}><Drop label="模式" value="正常" className="ml-[5px] w-[86px]" /></td>
          <td className={cell}><Box /></td>
          <td className={cell} />
          <td className={cell}><ParentPick /></td>
          <td className={cell} />
        </tr>
        <tr className="h-[25px] border-b border-[#1d1d1d] bg-[#242424]">
          <td className={cell} />
          <td className={cell} />
          <td className={cell}>
            <div className="-ml-[3px] flex items-center gap-1.5 text-sm">
              <button aria-label="X 位置 时间变化秒表"><StopwatchIcon /></button>
              X 位置
            </div>
          </td>
          <td className={`${cell} ${value}`}><button>540.0</button></td>
          <td className={cell} />
          <td className={cell} />
          <td className={cell} />
          <td className={`${cell} pl-[22px]`}><button aria-label="X 位置 属性关联器" className="block"><SpiralIcon /></button></td>
          <td className={cell} />
        </tr>
        <tr className="h-[25px] bg-[#242424]">
          <td className={cell} />
          <td className={cell} />
          <td className={cell}>
            <div className="-ml-[3px] flex h-6 items-center text-sm">
              <button aria-label="Y 位置 时间变化秒表"><StopwatchIcon active /></button>
              <button aria-label="包括此属性" className="ml-1.5 text-[#9a9a9a]"><GraphIcon /></button>
              <span className="ml-1 flex h-6 flex-1 items-center bg-[#484848] pl-1">Y 位置</span>
            </div>
          </td>
          <td className={`${cell} ${value}`}><button>893.0</button></td>
          <td className={cell} />
          <td className={cell} />
          <td className={cell} />
          <td className={`${cell} pl-[22px]`}><button aria-label="Y 位置 属性关联器" className="block"><SpiralIcon /></button></td>
          <td className={cell} />
        </tr>
        <tr className="h-[25px] bg-[#2f2f2f]">
          <td className={cell}>
            <div className="flex items-center">
              <button aria-label="展开图层" className="-ml-1"><ChevronRight size={13} /></button>
              <span className="ml-[3px] size-[18px] bg-[#aa2f40]" />
            </div>
          </td>
          <td className={`${cell} pl-[7px] font-bold`}>2</td>
          <td className={cell}>
            <div className="flex items-center gap-2 pl-1">
              <span className="size-5 border border-black bg-white" />
              <span className="font-bold whitespace-pre">白色  纯色  1</span>
            </div>
          </td>
          <td className={cell}><Switches /></td>
          <td className={cell}><Drop label="模式" value="正常" className="ml-[5px] w-[86px]" /></td>
          <td className={cell}><Box /></td>
          <td className={cell}><Drop label="轨道遮罩" value="无" className="w-[81px]" /></td>
          <td className={cell}><ParentPick /></td>
          <td className={cell} />
        </tr>
      </tbody>
    </table>
  );
}

function TimelineControls() {
  return (
    <div className="flex h-[43px] shrink-0 items-center text-[#a8a8a8]">
      <div className="w-[58px] shrink-0 overflow-hidden">
        <p className="text-lg leading-5 font-bold text-[#4a94e0]">:24</p>
        <p className="-ml-1.5 font-['Liberation_Mono',monospace] text-xs leading-5 text-[#27507a]">0 fps)</p>
      </div>
      <label className="flex h-6 w-[469px] shrink-0 items-center border border-[#2b2b2b] bg-[#141414] pl-2">
        <Search size={14} className="-scale-x-100" />
        <Icon size={7} box={8}><path d="M0 3h8L4 7z" /></Icon>
        <input aria-label="搜索图层" className="min-w-0 flex-1 bg-transparent outline-none" />
      </label>
      <button aria-label="合成微型流程图" className="ml-5">
        <Icon size={22} box={22}>
          <path d="M3 5h16M11 5v9h6" {...line} />
          <path d="m0 5 4-3v6zM5 3h5v4H5zM14 3h6v4h-6zM14 12h6v5h-6zM16 18h6l-3 3z" />
        </Icon>
      </button>
      <button aria-label="草图 3D" className="ml-[18px]">
        <Icon size={24} box={24}>
          <path d="m16 9 6.500 3v7L16 22.500 9.500 19v-7zM9.500 12l6.500 3.500 6.500-3.500M16 15.500v7" {...line} />
          <path d="m6 1 1 3 3-1-1 3 3 1-3 1 1 3-3-1-1 3-1-3-3 1 1-3-3-1 3-1-1-3 3 1z" />
        </Icon>
      </button>
      <button aria-label="隐藏消隐图层" className="ml-[19px]">
        <Icon size={22} box={22}>
          <path d="M1 12h20v7H1z" fill="#6c6c6c" />
          <path d="M6 10a5 5 0 0 1 10 0M11 4v12M5 10h12" {...line} strokeWidth={2} />
        </Icon>
      </button>
      <button aria-label="帧混合" className="ml-3"><FilmIcon size={20} /></button>
      <button aria-label="运动模糊" className="ml-3"><BlurIcon size={20} /></button>
      <button aria-label="图表编辑器" className="ml-6">
        <Icon size={20} box={20}>
          <path d="M2 4h17v14H2zM5 1v3M9 1v3M13 1v3M16 1v3M0 7h2M0 11h2M0 15h2M5 7q4 0 5 4t6 4" {...line} strokeWidth={1.400} />
        </Icon>
      </button>
    </div>
  );
}

const seconds = ["01s", "02s", "03s", "04s", "05s", "06s", "07s", "08s", "09s"];
const secondWidth = `${(100 / 9.36).toFixed(2)}%`;
const playheadLeft = `${((1.945 / 9.36) * 100).toFixed(2)}%`;

function Tracks() {
  return (
    <div className="relative ml-[9px] flex flex-1 flex-col">
      <div className="mt-[7px] h-[11px] bg-[#656565]" />
      <div className="flex h-[25px] font-['Liberation_Mono',monospace] text-xs text-[#9c9c9c]">
        <div className="flex shrink-0 flex-col justify-between" style={{ width: secondWidth }}>
          <span className="-ml-1.5 pt-[3px] leading-4">:00s</span>
          <span className="h-1.5 w-px bg-[#8a8a8a]" />
        </div>
        {seconds.map((s) => (
          <div key={s} className="flex shrink-0 flex-col justify-between" style={{ width: secondWidth }}>
            <span className="-ml-[11px] pt-[3px] leading-4">{s}</span>
            <span className="h-1.5 w-px bg-[#8a8a8a]" />
          </div>
        ))}
      </div>
      <div className="h-[19px] border-t-2 border-[#0e0e0e] bg-[#5e5e5e]" />
      <div className="h-[7px] border-y-2 border-[#143a14] bg-[#36a13c]" />
      <div className="flex flex-1 flex-col bg-[#2f2f2f]">
        <div className="h-[25px] border-b border-[#1d1d1d] py-px">
          <div className="h-full border-y border-l-2 border-[#8288c8] bg-linear-to-b from-[#5c66cf] to-[#525bc2]" />
        </div>
        <div className="h-[25px] border-b border-[#1d1d1d] bg-[#333]" />
        <div className="flex h-[25px] items-center border-b border-[#1d1d1d] bg-[#333]">
          <div className="-ml-[5px] shrink-0" style={{ width: secondWidth }}>
            <Icon size={12} box={12} className="text-[#a4a4a4]"><path d="m6 0 6 6-6 6-6-6z" /></Icon>
          </div>
          <Icon size={12} box={12}>
            <path d="M6 0v12L0 6z" fill="#4b97e2" />
            <path d="m6 0 6 6-6 6z" fill="#235c96" />
          </Icon>
        </div>
        <div className="h-[25px] border-b border-[#1d1d1d] py-px">
          <div className="h-full border-y border-[#7f4350] bg-[#70303c]" />
        </div>
      </div>

      {/* range handles on the left edge */}
      <div className="absolute top-[7px] -left-2 h-[11px] w-2 rounded-l-md bg-[#4390dc]" />
      <div className="absolute top-[45px] -left-[7px] h-[19px] w-[7px] rounded-l-md bg-[#4390dc]" />

      {/* current time indicator */}
      <div className="absolute inset-y-0 w-0" style={{ left: playheadLeft }}>
        <div className="absolute top-[7px] h-[11px] w-0.5 bg-[#6f9bd0]" />
        <div className="absolute top-8 bottom-0 w-0.5 bg-[#4a84b8]" />
        <svg width="16" height="13" viewBox="0 0 16 13" className="absolute top-6 -left-1.5" aria-hidden="true">
          <path d="M0 1 4 0l4 3 4-3 4 1v7l-8 5-8-5z" fill="#3f8bdc" />
        </svg>
        <svg width="10" height="15" viewBox="0 0 10 15" className="absolute top-[97px] -left-1" aria-hidden="true">
          <path d="M0 1h10M0 14h10M5 1v13" stroke="#a8b4c8" strokeWidth="2" />
        </svg>
        <div role="tooltip" className="absolute top-[49px] -left-px h-[23px] w-max bg-[#fcfcfc] px-[5px] text-[15px] leading-[22px] text-[#555] shadow-[3px_3px_3px_rgba(0,0,0,0.6)]">
          当前时间指示器
        </div>
        <svg width="13" height="19" viewBox="0 0 13 19" className="absolute top-[29px] -left-px" aria-hidden="true">
          <path d="M0 0v15l3.500-3 2.500 6 3-1.200L6.500 11H12z" fill="#fff" stroke="#111" strokeWidth="0.800" />
        </svg>
      </div>
    </div>
  );
}

function Timeline() {
  return (
    <section className="flex h-[294px] shrink-0 flex-col bg-[#212121]">
      <div className="flex h-[35px] shrink-0 text-[17px] text-[#7c7c7c]">
        <button className="-ml-3 h-8 w-[17px] shrink-0 pt-1">列</button>
        <div className="ml-[50px] flex h-8 w-[115px] items-center border-b-2 border-[#b8b8b8] pt-1 text-[#a8a8a8]">
          <button aria-label="关闭" className="text-sm">×</button>
          <span className="ml-2.5 size-[13px] bg-[#a89880]" />
          <span className="ml-3">合成 1</span>
          <button aria-label="面板菜单" className="ml-auto"><Menu size={14} /></button>
        </div>
      </div>
      <div className="flex min-h-0 flex-1">
        <div className="flex w-[780px] shrink-0 flex-col border-r-2 border-[#101010]">
          <TimelineControls />
          <LayerTable />
        </div>
        <Tracks />
      </div>
      <div className="flex h-[23px] shrink-0 items-center border-t-2 border-[#101010] pl-[786px] text-[#a8a8a8]">
        <button aria-label="缩小时间">
          <Icon size={12} box={12}><path d="m0 9 3-3 2 1 3-4 4 6z" /></Icon>
        </button>
        <input
          type="range"
          aria-label="时间缩放"
          defaultValue={0}
          className="ml-3.5 h-0.5 w-[60px] appearance-none bg-[#484848] [&::-webkit-slider-thumb]:size-3 [&::-webkit-slider-thumb]:appearance-none [&::-webkit-slider-thumb]:rounded-full [&::-webkit-slider-thumb]:border-[3px] [&::-webkit-slider-thumb]:border-[#9c9c9c] [&::-webkit-slider-thumb]:bg-[#212121]"
        />
        <button aria-label="放大时间" className="ml-4">
          <Icon size={20} box={20}><path d="m0 14 6-6 2 1-4 5zM6 14l7-9 7 9z" /></Icon>
        </button>
      </div>
    </section>
  );
}

export default function App() {
  return (
    <div className="flex h-screen min-h-[900px] flex-col overflow-hidden bg-[#151515] font-['Noto_Sans','Noto_Sans_CJK_SC',sans-serif]">
      <div className="h-[45px] shrink-0 bg-black" />
      <TitleBar />
      <Toolbar />
      <main className="mt-[3px] mb-1.5 flex min-h-0 flex-1 gap-1.5">
        <ProjectPanel />
        <Viewer />
        <SidePanels />
      </main>
      <Timeline />
      {/* desktop taskbar peeking out below the window */}
      <div className="flex h-1.5 shrink-0 border-t border-[#7f868c] bg-[#d0d8de]">
        <div className="w-[208px] bg-[#dcdee6]" />
        <div className="w-[180px] bg-[#f0f0f3]" />
        <div className="w-[71px] border-t-2 border-[#b4d8f2] bg-[#3f84c4]" />
      </div>
    </div>
  );
}
